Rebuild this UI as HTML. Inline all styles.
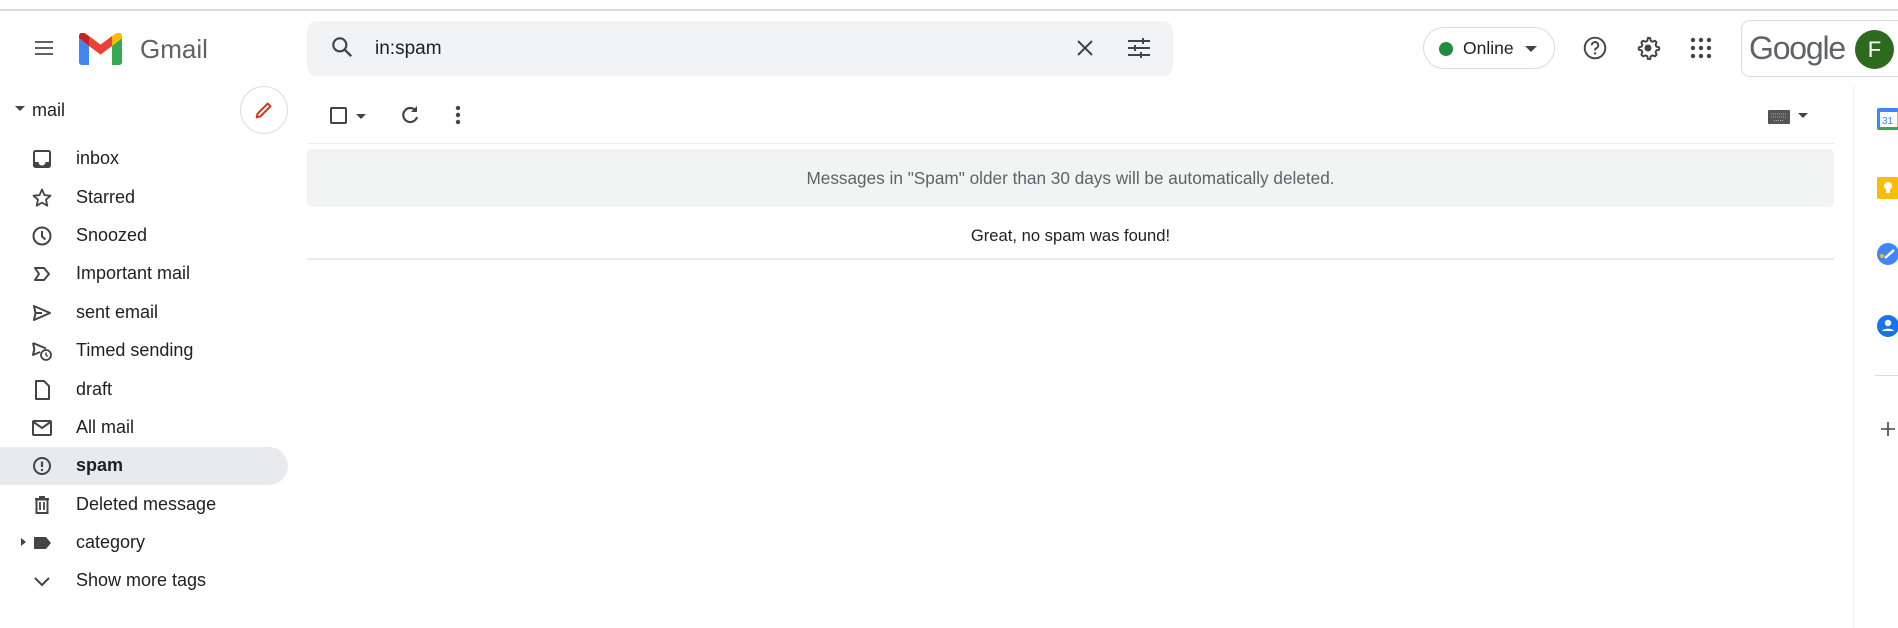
<!DOCTYPE html>
<html><head><meta charset="utf-8"><style>
*{margin:0;padding:0;box-sizing:border-box}
body{width:1898px;height:628px;overflow:hidden;background:#fff;font-family:"Liberation Sans",Arial,sans-serif;color:#202124;position:relative}
.a{position:absolute}
.nav{position:absolute;left:76px;font-size:18px;color:#202124;line-height:20px}
.ic{position:absolute;left:30px;width:24px;height:24px}
</style></head><body>
<div class="a" style="left:0;top:9px;width:1898px;height:2px;background:#dadce0"></div>
<svg class="a" style="left:32px;top:36px" width="24" height="24" viewBox="0 0 24 24"><path d="M3 6h18M3 12h18M3 18h18" stroke="#5f6368" stroke-width="2"/></svg>
<svg class="a" style="left:79px;top:33px" width="43" height="32" viewBox="0 0 43 32">
<path d="M0 5v24c0 1.7 1.3 3 3 3h7V13z" fill="#4285f4"/>
<path d="M33 32h7c1.7 0 3-1.3 3-3V5l-10 8z" fill="#34a853"/>
<path d="M33 3v10l10-8V3c0-3-3.5-4.5-5.8-2.7z" fill="#fbbc04"/>
<path d="M10 13V3l11.5 8.6L33 3v10l-11.5 8.6z" fill="#ea4335"/>
<path d="M0 3v2l10 8V3L5.8.3C3.5-1.5 0 0 0 3z" fill="#c5221f"/>
</svg>
<div class="a" style="left:140px;top:33px;font-size:26px;color:#5f6368;line-height:32px">Gmail</div>
<div class="a" style="left:307px;top:21px;width:866px;height:55px;background:#f1f3f4;border-radius:10px"></div>
<svg class="a" style="left:329px;top:34px" width="26" height="26" viewBox="0 0 24 24"><circle cx="10" cy="10" r="6" fill="none" stroke="#444" stroke-width="2"/><path d="M14.5 14.5l6 6" stroke="#444" stroke-width="2.2"/></svg>
<div class="a" style="left:375px;top:38px;font-size:19px;line-height:22px">in:spam</div>
<svg class="a" style="left:1073px;top:36px" width="24" height="24" viewBox="0 0 24 24"><path d="M5 5l14 14M19 5L5 19" stroke="#444" stroke-width="2"/></svg>
<svg class="a" style="left:1126px;top:36px" width="26" height="24" viewBox="0 0 26 24"><path d="M2 5h22M2 12h22M2 19h22" stroke="#444" stroke-width="2"/><path d="M17 2v6M9 9v6M15 16v6" stroke="#444" stroke-width="2"/></svg>
<div class="a" style="left:1423px;top:27px;width:132px;height:42px;border:1px solid #dadce0;border-radius:21px"></div>
<div class="a" style="left:1439px;top:42px;width:14px;height:14px;border-radius:50%;background:#1e8e3e"></div>
<div class="a" style="left:1463px;top:38px;font-size:17.5px;line-height:20px;color:#202124">Online</div>
<div class="a" style="left:1525px;top:46px;border-left:6px solid transparent;border-right:6px solid transparent;border-top:6px solid #444"></div>
<svg class="a" style="left:1582px;top:35px" width="26" height="26" viewBox="0 0 24 24"><circle cx="12" cy="12" r="9.5" fill="none" stroke="#444" stroke-width="1.8"/><path d="M9 9.5a3 3 0 1 1 4 2.8c-.8.4-1 1-1 1.9" fill="none" stroke="#444" stroke-width="1.8"/><circle cx="12" cy="17" r="1.1" fill="#444"/></svg>
<svg class="a" style="left:1635px;top:35px" width="26" height="26" viewBox="0 0 24 24"><path d="M12 2.5l2 .3.5 2.5 1.6.9 2.4-.9 1.4 1.5-.9 2.4.8 1.6 2.5.6v2.2l-2.5.6-.8 1.6.9 2.4-1.4 1.5-2.4-.9-1.6.9-.5 2.5h-2.1l-.5-2.5-1.6-.9-2.4.9-1.5-1.5.9-2.4-.8-1.6-2.5-.6v-2.2l2.5-.6.8-1.6-.9-2.4 1.5-1.5 2.4.9 1.6-.9.5-2.5z" fill="none" stroke="#444" stroke-width="1.8" stroke-linejoin="round"/><circle cx="12" cy="12" r="3.2" fill="#444"/></svg>
<svg class="a" style="left:1690px;top:37px" width="22" height="22" viewBox="0 0 22 22" fill="#444"><circle cx="3" cy="3" r="2.2"/><circle cx="11" cy="3" r="2.2"/><circle cx="19" cy="3" r="2.2"/><circle cx="3" cy="11" r="2.2"/><circle cx="11" cy="11" r="2.2"/><circle cx="19" cy="11" r="2.2"/><circle cx="3" cy="19" r="2.2"/><circle cx="11" cy="19" r="2.2"/><circle cx="19" cy="19" r="2.2"/></svg>
<div class="a" style="left:1741px;top:20px;width:170px;height:57px;border:1px solid #dadce0;border-radius:9px"></div>
<div class="a" style="left:1749px;top:29px;font-size:32px;line-height:38px;color:#5f6368;letter-spacing:-1.2px">Google</div>
<div class="a" style="left:1855px;top:30px;width:39px;height:39px;border-radius:50%;background:#2d6a1f;color:#fff;font-size:22px;text-align:center;line-height:39px">F</div>
<div class="a" style="left:15px;top:106px;border-left:5px solid transparent;border-right:5px solid transparent;border-top:5px solid #444"></div>
<div class="a" style="left:32px;top:99px;font-size:18px;line-height:22px">mail</div>
<div class="a" style="left:240px;top:86px;width:48px;height:48px;border-radius:50%;border:1px solid #dadce0;background:#fff"></div>
<svg class="a" style="left:253px;top:99px" width="22" height="22" viewBox="0 0 24 24"><path d="M4 20l1-4L16 5l3 3L8 19z" fill="none" stroke="#d93025" stroke-width="2.2" stroke-linejoin="round"/></svg>
<div class="a" style="left:0;top:447px;width:288px;height:38px;background:#e8eaed;border-radius:0 19px 19px 0"></div>
<svg class="ic" style="top:147px" viewBox="0 0 24 24"><rect x="4" y="4" width="16" height="16" rx="1.5" fill="none" stroke="#444" stroke-width="2"/><path d="M4 15h4.5a3.5 3.5 0 0 0 7 0H20v5H4z" fill="#444"/></svg>
<div class="nav" style="top:148px">inbox</div>
<svg class="ic" style="top:186px" viewBox="0 0 24 24"><path d="M12 3.5l2.5 5.6 6 .6-4.5 4 1.3 6-5.3-3.1-5.3 3.1 1.3-6-4.5-4 6-.6z" fill="none" stroke="#444" stroke-width="1.8" stroke-linejoin="round"/></svg>
<div class="nav" style="top:187px">Starred</div>
<svg class="ic" style="top:224px" viewBox="0 0 24 24"><circle cx="12" cy="12" r="8.5" fill="none" stroke="#444" stroke-width="2"/><path d="M12 7v5.5l3.5 3" fill="none" stroke="#444" stroke-width="2"/></svg>
<div class="nav" style="top:225px">Snoozed</div>
<svg class="ic" style="top:262px" viewBox="0 0 24 24"><path d="M5 6h9l5 6-5 6H5l4-6z" fill="none" stroke="#444" stroke-width="2" stroke-linejoin="round"/></svg>
<div class="nav" style="top:263px">Important mail</div>
<svg class="ic" style="top:301px" viewBox="0 0 24 24"><path d="M4 5l16 7-16 7 1.5-7zM5.5 12H12" fill="none" stroke="#444" stroke-width="2" stroke-linejoin="round"/></svg>
<div class="nav" style="top:302px">sent email</div>
<svg class="ic" style="top:339px" viewBox="0 0 24 24"><path d="M3 4l13 5.5M3 4l1.3 6L3 16l7-3" fill="none" stroke="#444" stroke-width="2" stroke-linejoin="round"/><circle cx="16" cy="16" r="5" fill="none" stroke="#444" stroke-width="1.8"/><path d="M16 13.5V16l1.7 1.5" fill="none" stroke="#444" stroke-width="1.5"/></svg>
<div class="nav" style="top:340px">Timed sending</div>
<svg class="ic" style="top:378px" viewBox="0 0 24 24"><path d="M6 3h8l5 5v13H6z" fill="none" stroke="#444" stroke-width="2" stroke-linejoin="round"/></svg>
<div class="nav" style="top:379px">draft</div>
<svg class="ic" style="top:416px" viewBox="0 0 24 24"><rect x="3" y="5" width="18" height="14" rx="1" fill="none" stroke="#444" stroke-width="2"/><path d="M3.5 6l8.5 6 8.5-6" fill="none" stroke="#444" stroke-width="2"/></svg>
<div class="nav" style="top:417px">All mail</div>
<svg class="ic" style="top:454px" viewBox="0 0 24 24"><circle cx="12" cy="12" r="8" fill="none" stroke="#444" stroke-width="2"/><path d="M12 7.5v5.5" stroke="#444" stroke-width="2.2"/><circle cx="12" cy="16" r="1.2" fill="#444"/></svg>
<div class="nav" style="top:455px;font-weight:bold">spam</div>
<svg class="ic" style="top:493px" viewBox="0 0 24 24"><path d="M5 6h14M9 4h6" stroke="#444" stroke-width="2"/><path d="M6.5 6.5h11V20h-11z" fill="none" stroke="#444" stroke-width="2"/><path d="M10 9v8M14 9v8" stroke="#444" stroke-width="1.8"/></svg>
<div class="nav" style="top:494px">Deleted message</div>
<div class="a" style="left:21px;top:538px;border-top:4px solid transparent;border-bottom:4px solid transparent;border-left:5px solid #444"></div>
<svg class="ic" style="top:531px" viewBox="0 0 24 24"><path d="M4 6h12l5 6-5 6H4z" fill="#444"/></svg>
<div class="nav" style="top:532px">category</div>
<svg class="ic" style="top:569px" viewBox="0 0 24 24"><path d="M5 9l7 7 7-7" fill="none" stroke="#444" stroke-width="2"/></svg>
<div class="nav" style="top:570px">Show more tags</div>
<div class="a" style="left:330px;top:107px;width:17px;height:17px;border:2px solid #444;border-radius:2px"></div>
<div class="a" style="left:356px;top:114px;border-left:5px solid transparent;border-right:5px solid transparent;border-top:5px solid #444"></div>
<svg class="a" style="left:398px;top:103px" width="24" height="24" viewBox="0 0 24 24"><path d="M18 8a7 7 0 1 0 1 6" fill="none" stroke="#444" stroke-width="2.2"/><path d="M19 3v6h-6z" fill="#444"/></svg>
<svg class="a" style="left:449px;top:104px" width="18" height="22" viewBox="0 0 18 22" fill="#444"><circle cx="9" cy="4" r="2.2"/><circle cx="9" cy="11" r="2.2"/><circle cx="9" cy="18" r="2.2"/></svg>
<svg class="a" style="left:1768px;top:110px" width="22" height="14" viewBox="0 0 22 14"><rect width="22" height="14" rx="1" fill="#555"/><path d="M3 4h16M3 7h16M6 10.5h10" stroke="#aaa" stroke-width="1" stroke-dasharray="1 1"/></svg>
<div class="a" style="left:1798px;top:113px;border-left:5px solid transparent;border-right:5px solid transparent;border-top:5px solid #444"></div>
<div class="a" style="left:307px;top:143px;width:1527px;height:1px;background:#e8eaed"></div>
<div class="a" style="left:307px;top:149px;width:1527px;height:58px;background:#f2f3f3;border-radius:5px"></div>
<div class="a" style="left:307px;top:168px;width:1527px;text-align:center;font-size:17.2px;color:#5f6368;line-height:20px">Messages in "Spam" older than 30 days will be automatically deleted.</div>
<div class="a" style="left:307px;top:226px;width:1527px;text-align:center;font-size:16.6px;color:#202124;line-height:20px">Great, no spam was found!</div>
<div class="a" style="left:307px;top:258px;width:1527px;height:2px;background:#e8eaed"></div>
<div class="a" style="left:1853px;top:86px;width:1px;height:542px;background:#eceff1"></div>
<svg class="a" style="left:1877px;top:108px" width="24" height="24" viewBox="0 0 24 24"><rect x="0" y="0" width="22" height="22" rx="2" fill="#4285f4"/><rect x="3" y="4" width="17" height="15" fill="#fff"/><path d="M0 19h20v3H2a2 2 0 0 1-2-2z" fill="#34a853"/><path d="M20 4h2v15h-2z" fill="#fbbc04"/><text x="5" y="16" font-size="10" fill="#4285f4" font-family="Liberation Sans">31</text></svg>
<svg class="a" style="left:1877px;top:177px" width="24" height="24" viewBox="0 0 24 24"><rect width="22" height="22" rx="2" fill="#fbbc04"/><circle cx="11" cy="9" r="4" fill="#fff"/><rect x="9" y="13" width="4" height="3" fill="#fff"/></svg>
<svg class="a" style="left:1877px;top:243px" width="24" height="24" viewBox="0 0 24 24"><circle cx="11" cy="11" r="11" fill="#4285f4"/><path d="M8 15l9-8" stroke="#fff" stroke-width="2.5"/><circle cx="5" cy="13" r="2" fill="#fbbc04"/></svg>
<svg class="a" style="left:1877px;top:315px" width="24" height="24" viewBox="0 0 24 24"><circle cx="11" cy="11" r="11" fill="#1a73e8"/><circle cx="11" cy="8" r="3.2" fill="#fff"/><path d="M5 16c1-3 11-3 12 0z" fill="#fff"/></svg>
<div class="a" style="left:1875px;top:375px;width:23px;height:1px;background:#dadce0"></div>
<svg class="a" style="left:1880px;top:421px" width="16" height="16" viewBox="0 0 16 16"><path d="M8 1v14M1 8h14" stroke="#444" stroke-width="1.6"/></svg>
</body></html>
